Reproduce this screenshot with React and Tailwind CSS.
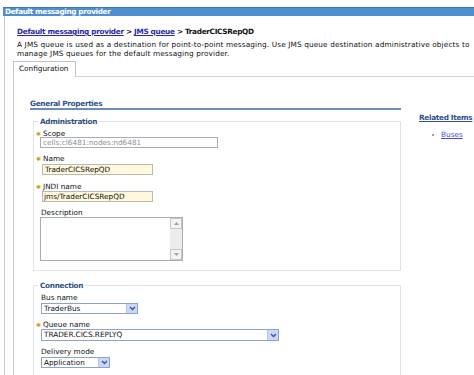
import React from "react";

function Star() {
  return (
    <span className="inline-block w-[7px] text-[#c9a21a] text-[6px] leading-[8px]">✱</span>
  );
}

function Chevron() {
  return (
    <svg width="7" height="5" viewBox="0 0 7 5">
      <path d="M1 1 L3.5 3.5 L6 1" fill="none" stroke="#3f5688" strokeWidth="1.4" />
    </svg>
  );
}

function Select({ width, value, h = "h-[11px]" }) {
  return (
    <div className={`${width} ${h} border border-[#8ea4c4] bg-white flex items-stretch`}>
      <div className="flex-1 pl-[2px] leading-[9px] whitespace-nowrap overflow-hidden">{value}</div>
      <div className="w-[11px] bg-[#c8d8fa] border-l border-[#b3c6ee] flex items-center justify-center">
        <Chevron />
      </div>
    </div>
  );
}

function Tri({ up }) {
  return (
    <svg width="5" height="3" viewBox="0 0 5 3">
      <path d={up ? "M0 3 L2.5 0 L5 3 Z" : "M0 0 L2.5 3 L5 0 Z"} fill="#9aa3ad" />
    </svg>
  );
}

export default function App() {
  return (
    <div className="w-[474px] h-[375px] overflow-hidden bg-white text-[7.3px] leading-[9px] text-[#111] font-['DejaVu_Sans',Verdana,sans-serif]">
      <div className="pt-[7px]">
        <div className="ml-[3px] h-[9px] bg-[#4f8fd0] border-t border-[#3f78b8] pl-[2px] font-bold text-white leading-[8px] whitespace-nowrap tracking-[-0.35px]">
          Default messaging provider
        </div>
        <div className="ml-[4px] border-l border-[#c6ccd3]">
          <div className="pl-[12px] pt-[11px]">
            <div className="font-bold leading-[9px] whitespace-nowrap tracking-[-0.3px]">
              <span className="text-[#2a2aa8] underline">Default messaging provider</span>
              {" > "}
              <span className="text-[#2a2aa8] underline">JMS queue</span>
              {" > "}
              <span>TraderCICSRepQD</span>
            </div>
            <div className="mt-[5px] leading-[8.5px] whitespace-nowrap tracking-[0.14px]">
              A JMS queue is used as a destination for point-to-point messaging. Use JMS queue destination administrative objects to
              <br />
              manage JMS queues for the default messaging provider.
            </div>
          </div>

          <div className="flex ml-[8px] mt-[3px]">
            <div className="h-[16px] border border-b-0 border-[#bcc4cd] pl-[5px] pr-[6px] leading-[14px] bg-white">
              Configuration
            </div>
            <div className="flex-1 border-b border-[#cfd4da]" />
          </div>

          <div className="ml-[8px] border-l border-[#c6ccd3] pl-[16px] pt-[23px] flex">
            <div className="w-[371px] shrink-0">
              <div className="font-bold text-[#2f4f8f] leading-[8px] border-b-2 border-[#6d8db8] tracking-[-0.3px]">
                General Properties
              </div>

              <fieldset className="ml-[3px] mt-[7px] border border-[#dfe3e8] pl-[7px] pb-[9px]">
                <legend className="-ml-[3px] px-[2px] font-bold text-[#2f5080] leading-[9px] tracking-[-0.3px]">Administration</legend>
                <div className="mt-[4px] leading-[8px] whitespace-nowrap">
                  <span className="-ml-[5px]"><Star /></span>Scope
                </div>
                <div className="-ml-[1px] mt-[-1px] w-[178px] h-[11px] border border-[#a7adb4] bg-white pl-[2px] leading-[9px] text-[#8a8f96]">
                  cells:cl6481:nodes:nd6481
                </div>

                <div className="mt-[7px] leading-[8px] whitespace-nowrap">
                  <span className="-ml-[5px]"><Star /></span>Name
                </div>
                <div className="ml-[1px] mt-[1px] w-[111px] h-[11px] border border-[#b9b9ae] bg-[#fff8dc] pl-[2px] leading-[9px]">
                  TraderCICSRepQD
                </div>

                <div className="mt-[8px] leading-[8px] whitespace-nowrap">
                  <span className="-ml-[5px]"><Star /></span>JNDI name
                </div>
                <div className="ml-[1px] w-[111px] h-[11px] border border-[#b9b9ae] bg-[#fff8dc] pl-[1px] leading-[9px]">
                  jms/TraderCICSRepQD
                </div>

                <div className="mt-[7px] leading-[8px]">Description</div>
                <div className="-ml-[1px] w-[143px] h-[44px] border border-[#a7adb4] bg-white flex justify-end">
                  <div className="w-[12px] bg-[#ececec] flex flex-col justify-between">
                    <div className="h-[11px] border border-[#c3c7cc] bg-[#f3f3f3] flex items-center justify-center">
                      <Tri up />
                    </div>
                    <div className="h-[11px] border border-[#c3c7cc] bg-[#f3f3f3] flex items-center justify-center">
                      <Tri />
                    </div>
                  </div>
                </div>
              </fieldset>

              <fieldset className="ml-[3px] mt-[10px] border border-[#dfe3e8] pl-[7px] pb-[9px]">
                <legend className="-ml-[3px] px-[2px] font-bold text-[#2f5080] leading-[9px] tracking-[-0.3px]">Connection</legend>
                <div className="mt-[4px] leading-[8px]">Bus name</div>
                <div className="mt-[1px]">
                  <Select width="w-[97px]" value="TraderBus" />
                </div>

                <div className="mt-[7px] leading-[8px] whitespace-nowrap">
                  <span className="-ml-[5px]"><Star /></span>Queue name
                </div>
                <div>
                  <Select width="w-[238px]" h="h-[12px]" value="TRADER.CICS.REPLYQ" />
                </div>

                <div className="mt-[7px] leading-[8px]">Delivery mode</div>
                <div className="mt-[1px]">
                  <Select width="w-[69px]" value="Application" />
                </div>
              </fieldset>
            </div>

            <div className="ml-[18px] pt-[13px] whitespace-nowrap">
              <div className="font-bold text-[#2f4f8f] underline leading-[9px] tracking-[-0.3px]">Related Items</div>
              <div className="mt-[8px] flex items-center leading-[9px]">
                <span className="ml-[13px] w-[2px] h-[2px] bg-[#9aa0a8]" />
                <span className="ml-[7px] text-[#4a4ad8] underline">Buses</span>
              </div>
            </div>
          </div>
        </div>
      </div>
    </div>
  );
}
